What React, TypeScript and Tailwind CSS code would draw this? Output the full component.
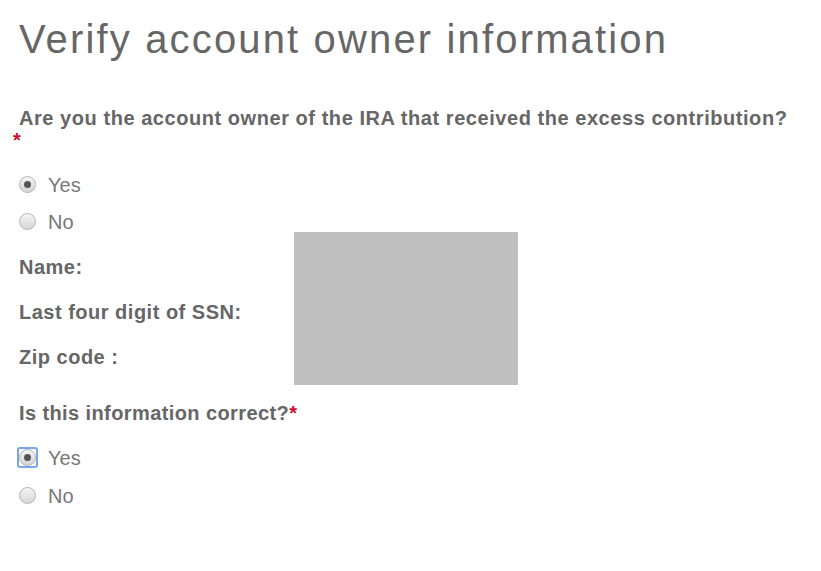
import React from "react";

type RadioProps = { label: string; checked?: boolean; focused?: boolean };

function Radio({ label, checked, focused }: RadioProps) {
  return (
    <label className="flex items-center gap-[10px] h-[37px]">
      <span
        className={
          "flex items-center justify-center w-[21px] h-[21px] rounded-[3px] border-2 " +
          (focused ? "border-[#7ba3ee]" : "border-transparent")
        }
      >
        <span className="flex items-center justify-center w-[17px] h-[17px] rounded-full border border-[#b4b4b4] bg-gradient-to-b from-[#f4f4f4] to-[#d6d6d6]">
          {checked && <span className="w-[7px] h-[7px] rounded-full bg-[#555]" />}
        </span>
      </span>
      <span className="text-[20px] text-[#777] font-light leading-none">{label}</span>
    </label>
  );
}

function Required() {
  return <span className="text-[#c8102e] font-bold text-[20px]">*</span>;
}

export default function App() {
  const fields = ["Name:", "Last four digit of SSN:", "Zip code :"];

  return (
    <div className="min-h-[571px] bg-white font-['Liberation_Sans',Arial,sans-serif] px-[19px] pt-[14px]">
      <h1 className="text-[40px] leading-[50px] text-[#666] tracking-[2.15px]">
        Verify account owner information
      </h1>

      {/* question 1 */}
      <div className="mt-[43px] text-[20px] font-semibold text-[#666] leading-[22px]">
        <p className="tracking-[0.55px]">
          Are you the account owner of the IRA that received the excess contribution?
        </p>
        <div className="-ml-[6px] h-[16px] leading-[22px]">
          <Required />
        </div>
      </div>

      <div className="mt-[21px] -ml-[2px]">
        <Radio label="Yes" checked />
        <Radio label="No" />
      </div>

      {/* owner details, values redacted */}
      <div className="relative mt-[17px]">
        <div className="flex flex-col gap-[24px] text-[20px] font-semibold text-[#666] leading-[21px] tracking-[0.5px]">
          {fields.map((f) => (
            <div key={f}>{f}</div>
          ))}
        </div>
        <div className="absolute left-[275px] top-[-25px] w-[224px] h-[153px] bg-[#c0c0c0]" />
      </div>

      {/* question 2 */}
      <div className="mt-[34px] text-[20px] font-semibold text-[#666] leading-[22px] tracking-[0.4px]">
        Is this information correct?
        <Required />
      </div>

      <div className="mt-[15px] -ml-[2px]">
        <Radio label="Yes" checked focused />
        <div className="mt-[1px]">
          <Radio label="No" />
        </div>
      </div>
    </div>
  );
}
